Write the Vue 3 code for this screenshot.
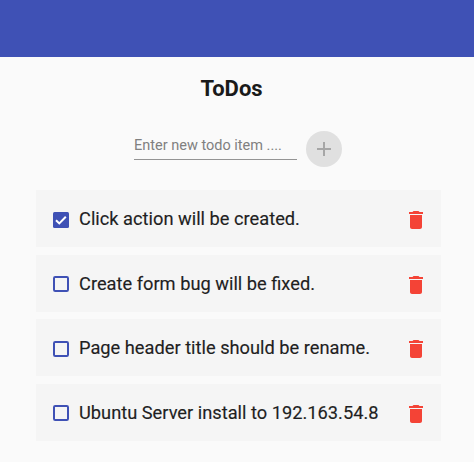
<script setup>
const todos = [
  { text: 'Click action will be created.', done: true },
  { text: 'Create form bug will be fixed.', done: false },
  { text: 'Page header title should be rename.', done: false },
  { text: 'Ubuntu Server install to 192.163.54.8', done: false },
]
</script>

<template>
  <div class="page">
    <header class="bar"></header>
    <main class="content">
      <h1 class="title">ToDos</h1>
      <form class="add" @submit.prevent>
        <input class="field" type="text" placeholder="Enter new todo item ...." />
        <button class="fab" type="button" aria-label="Add">
          <svg viewBox="0 0 24 24" width="24" height="24"><path d="M19 13h-6v6h-2v-6H5v-2h6V5h2v6h6v2z" fill="#a6a6a6" /></svg>
        </button>
      </form>
      <ul class="list">
        <li v-for="t in todos" :key="t.text" class="row">
          <svg class="check" viewBox="0 0 16 16" width="16" height="16">
            <template v-if="t.done">
              <rect width="16" height="16" rx="1.5" fill="#3f51b5" />
              <path d="M3 8.200l3.300 3.200 6.500-6.600" fill="none" stroke="#fff" stroke-width="2" />
            </template>
            <rect v-else x="1" y="1" width="14" height="14" rx="1.200" fill="none" stroke="#3f51b5" stroke-width="2" />
          </svg>
          <span class="label">{{ t.text }}</span>
          <svg class="trash" viewBox="0 0 24 24" width="24" height="24"><path d="M6 19c0 1.100.9 2 2 2h8c1.100 0 2-.9 2-2V7H6v12zM19 4h-3.500l-1-1h-5l-1 1H5v2h14V4z" fill="#f44336" /></svg>
        </li>
      </ul>
    </main>
  </div>
</template>

<style scoped>
.page { height: 462px; background: #fafafa; font-family: Roboto, "Liberation Sans", sans-serif; overflow: hidden; }
.bar { height: 57px; background: #3f51b5; }
.content { display: flex; flex-direction: column; align-items: center; }
.title { margin: 18px 11px 0 0; font-size: 22px; line-height: 28px; font-weight: 700; color: #1a1a1a; }
.add { display: flex; align-items: center; gap: 9px; margin: 28px 0 0 2px; }
.field { width: 163px; height: 27px; padding: 0; border: 0; border-bottom: 1px solid #949494; background: transparent; font: 14.500px Roboto, sans-serif; outline: none; box-sizing: border-box; margin-top: -6px; }
.field::placeholder { color: #808080; opacity: 1; }
.fab { width: 36px; height: 36px; padding: 0; border: 0; border-radius: 50%; background: #e0e0e0; display: flex; align-items: center; justify-content: center; }
.list { list-style: none; margin: 23px 0 0 3px; padding: 0; width: 405px; display: flex; flex-direction: column; gap: 7.670px; }
.row { height: 57px; background: #f5f5f5; display: flex; align-items: center; padding: 0 13px 0 17px; box-sizing: border-box; }
.check { flex: none; margin-top: 2px; }
.label { flex: 1; margin: 0 0 0 10px; font-size: 18.250px; color: #1f1f1f; white-space: nowrap; -webkit-text-stroke: 0.150px #1f1f1f; }
.trash { flex: none; margin-top: 3px; }
</style>
